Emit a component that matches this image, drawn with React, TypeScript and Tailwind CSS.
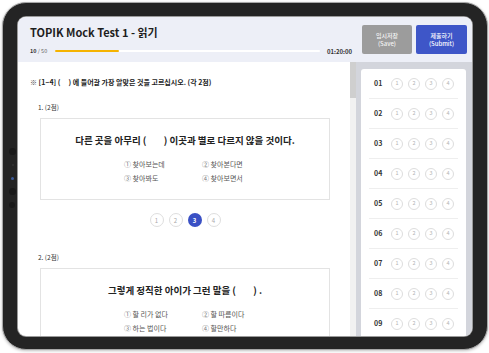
import React from "react";

const font = { fontFamily: '"Noto Sans CJK KR", "Noto Sans", sans-serif' };

interface Question {
  no: number;
  sentence: string;
  options: string[];
}

const questions: Question[] = [
  {
    no: 1,
    sentence: "다른 곳을 아무리 (        ) 이곳과 별로 다르지 않을 것이다.",
    options: ["찾아보는데", "찾아본다면", "찾아봐도", "찾아보면서"],
  },
  {
    no: 2,
    sentence: "그렇게 정직한 아이가 그런 말을 (        ) .",
    options: ["할 리가 없다", "할 따름이다", "하는 법이다", "할만하다"],
  },
];

const marks = ["①", "②", "③", "④"];

function QuestionCard({ q }: { q: Question }) {
  return (
    <div className="border border-[#e3e3e3] bg-white pt-[14px] pb-[14px]">
      <div className="whitespace-pre text-center text-[9.5px] font-bold leading-[14px] text-[#222]">
        {q.sentence}
      </div>
      <div className="ml-[83px] mt-[10px] grid grid-cols-[78px_78px] text-[7px] leading-[14px] text-[#555]">
        {q.options.map((o, i) => (
          <div key={i} className="whitespace-nowrap">
            <span className="text-[#777]">{marks[i]}</span> {o}
          </div>
        ))}
      </div>
    </div>
  );
}

function AnswerRow({ no }: { no: number }) {
  return (
    <div className="flex h-[30px] items-center border-b border-[#eeeeee] pl-[5px]">
      <span className="w-[16px] text-[7px] font-bold text-[#333]">
        {String(no).padStart(2, "0")}
      </span>
      <div className="ml-[1px] flex gap-[5px]">
        {[1, 2, 3, 4].map((n) => (
          <div
            key={n}
            className="flex h-[12px] w-[12px] items-center justify-center rounded-full border border-[#dddddd] text-[5.5px] text-[#b5b5b5]"
          >
            {n}
          </div>
        ))}
      </div>
    </div>
  );
}

export default function App() {
  return (
    <div className="h-[353px] w-[489px] overflow-hidden bg-white pl-[2px] pt-[2px]" style={font}>
      <div className="relative h-[348px] w-[486px] rounded-[24px] border border-[#a8a8a8] bg-[#242424] pb-[13px] pl-[15px] pr-[15px] pt-[14px] shadow-[0_1px_3px_rgba(0,0,0,0.25)]">
        {/* side buttons on the bezel */}
        <div className="absolute left-[6px] top-[145px] h-[7px] w-[7px] rounded-full bg-[#1a1a1a]" />
        <div className="absolute left-[9px] top-[161px] h-[2px] w-[2px] rounded-full bg-[#333]" />
        <div className="absolute left-[8px] top-[174px] h-[3px] w-[3px] rounded-full bg-[#3b5b9b]" />
        <div className="absolute left-[6px] top-[185px] h-[7px] w-[7px] rounded-full bg-[#1a1a1a]" />
        <div className="absolute left-[6px] top-[199px] h-[6px] w-[6px] rounded-full bg-[#1a1a1a]" />

        <div className="flex h-[319px] w-[454px] flex-col overflow-hidden rounded-[8px] bg-white ring-1 ring-[#9a9a9a]">
          {/* header */}
          <div className="flex h-[45px] shrink-0 bg-[#edeff7]">
            <div className="flex-1 pl-[12px]">
              <div className="mt-[7px] text-[11px] font-bold leading-[16px] text-[#1d1d1d]">
                TOPIK Mock Test 1 - 읽기
              </div>
              <div className="mt-[6px] flex h-[10px] items-center">
                <span className="w-[25px] text-[5.5px] text-[#666]">
                  <b className="text-[#333]">10</b> / 50
                </span>
                <div className="h-[2px] w-[265px] rounded-full bg-white">
                  <div className="h-[2px] w-[64px] rounded-full bg-[#f5b300]" />
                </div>
                <span className="ml-[7px] text-[6px] font-semibold text-[#333]">01:20:00</span>
              </div>
            </div>
            <div className="mr-[5px] mt-[8px] flex h-[29px] gap-[4px]">
              <button className="flex w-[50px] flex-col items-center justify-center rounded-[2px] bg-[#9c9c9c] text-[6px] font-medium leading-[8px] text-[#f4f4f4]">
                <span>임시저장</span>
                <span>(Save)</span>
              </button>
              <button className="flex w-[51px] flex-col items-center justify-center rounded-[2px] bg-[#3e56c8] text-[6px] font-medium leading-[8px] text-white">
                <span>제출하기</span>
                <span>(Submit)</span>
              </button>
            </div>
          </div>

          {/* body */}
          <div className="flex min-h-0 flex-1">
            <div className="w-[332px] shrink-0 overflow-hidden pl-[12px] pr-[20px]">
              <div className="mt-[14px] whitespace-pre text-[7px] font-bold leading-[12px] text-[#222]">
                <span className="text-[#444]">※</span> [1~4] (     ) 에 들어갈 가장 알맞은 것을 고르십시오. (각 2점)
              </div>

              <div className="ml-[8px]">
                <div className="mt-[14px] text-[6.5px] leading-[10px] text-[#333]">1. (2점)</div>
                <div className="ml-[2px] mt-[6px]">
                  <QuestionCard q={questions[0]} />
                </div>

                <div className="ml-[2px] mt-[13px] flex justify-center gap-[5px]">
                  {[1, 2, 3, 4].map((n) => (
                    <div
                      key={n}
                      className={
                        n === 3
                          ? "flex h-[14px] w-[14px] items-center justify-center rounded-full bg-[#3a50c4] text-[6px] font-bold text-white"
                          : "flex h-[14px] w-[14px] items-center justify-center rounded-full border border-[#dedede] text-[6px] text-[#aaa]"
                      }
                    >
                      {n}
                    </div>
                  ))}
                </div>

                <div className="mt-[25px] text-[6.5px] leading-[10px] text-[#333]">2. (2점)</div>
                <div className="ml-[2px] mt-[6px]">
                  <QuestionCard q={questions[1]} />
                </div>
              </div>
            </div>

            {/* scrollbar */}
            <div className="flex w-[6px] shrink-0 flex-col bg-[#f1f1f1]">
              <div className="h-[36px] bg-[#cfcfcf]" />
            </div>

            {/* answer sheet */}
            <div className="flex-1 bg-[#d3d5dc] pl-[5px] pr-[6px] pt-[7px]">
              <div className="h-full rounded-t-[3px] bg-white px-[8px]">
                {[1, 2, 3, 4, 5, 6, 7, 8, 9].map((n) => (
                  <AnswerRow key={n} no={n} />
                ))}
              </div>
            </div>
          </div>
        </div>
      </div>
    </div>
  );
}
